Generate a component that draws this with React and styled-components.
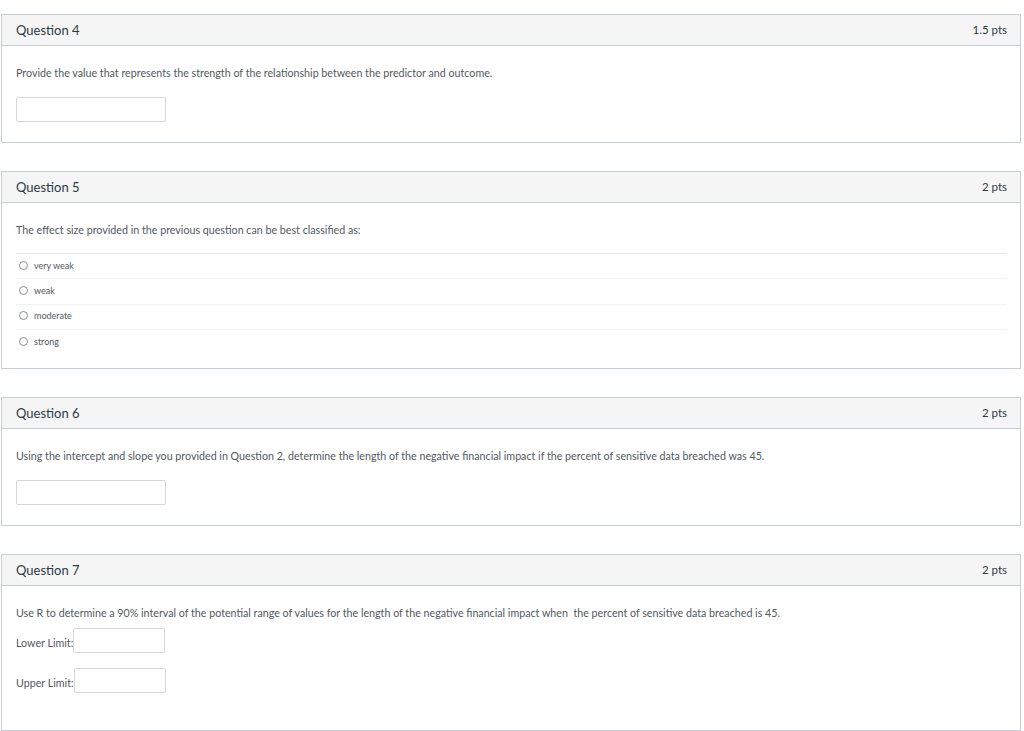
import React from "react";
import styled, { createGlobalStyle } from "styled-components";

const GlobalStyle = createGlobalStyle`
  body {
    margin: 0;
    background: #fff;
    font-family: Lato, "Open Sans", sans-serif;
    color: #2d3b45;
  }
`;

const Page = styled.div`
  padding: 14px 3px 0 1px;
`;

const Card = styled.div`
  border: 1px solid #c7cdd1;
  margin-bottom: 28px;
  background: #fff;
`;

const Header = styled.div`
  height: 29px;
  display: flex;
  align-items: center;
  justify-content: space-between;
  padding: 0 13px 1px 14px;
  background: #f5f5f5;
  border-bottom: 1px solid #c7cdd1;
`;

const Title = styled.span`
  font-size: 13px;
  color: #2d3b45;
`;

const Points = styled.span`
  font-size: 11.5px;
  color: #2d3b45;
`;

const Body = styled.div`
  padding: 20px 13px ${(p) => p.bottom || 20}px 14px;
`;

const Text = styled.div`
  font-size: 10.7px;
  line-height: 14px;
  color: #52595e;
  margin-bottom: ${(p) => p.gap || 17}px;
`;

const Field = styled.input`
  display: block;
  box-sizing: border-box;
  width: ${(p) => p.width || 150}px;
  height: 25px;
  border: 1px solid #d4d7da;
  border-radius: 2px;
  background: #fff;
  margin: 0;
`;

const Options = styled.div`
  display: flex;
  flex-direction: column;
`;

const Option = styled.label`
  display: flex;
  align-items: center;
  gap: 6px;
  height: 25.3px;
  padding: 0 0 2px 3px;
  box-sizing: border-box;
  border-top: 1px solid ${(p) => (p.first ? "#e6e8ea" : "#f0f1f2")};
  font-size: 9px;
  color: #52595e;
`;

const Radio = styled.span`
  box-sizing: border-box;
  width: 9px;
  height: 9px;
  border-radius: 50%;
  border: 1px solid #8a9095;
  background: #fff;
`;

const LimitRow = styled.div`
  display: flex;
  align-items: flex-end;
  margin-bottom: ${(p) => p.gap || 0}px;
`;

const LimitLabel = styled.span`
  font-size: 10.7px;
  line-height: 14px;
  padding-bottom: 3px;
  color: #52595e;
`;

const QuestionCard = ({ title, pts, children }) => (
  <Card>
    <Header>
      <Title>{title}</Title>
      <Points>{pts}</Points>
    </Header>
    {children}
  </Card>
);

export default function App() {
  return (
    <Page>
      <GlobalStyle />
      <QuestionCard title="Question 4" pts="1.5 pts">
        <Body>
          <Text>
            Provide the value that represents the strength of the relationship
            between the predictor and outcome.
          </Text>
          <Field type="text" />
        </Body>
      </QuestionCard>

      <QuestionCard title="Question 5" pts="2 pts">
        <Body bottom={14}>
          <Text gap={16}>
            The effect size provided in the previous question can be best
            classified as:
          </Text>
          <Options>
            {["very weak", "weak", "moderate", "strong"].map((o, i) => (
              <Option key={o} first={i === 0}>
                <Radio />
                {o}
              </Option>
            ))}
          </Options>
        </Body>
      </QuestionCard>

      <QuestionCard title="Question 6" pts="2 pts">
        <Body>
          <Text>
            Using the intercept and slope you provided in Question 2, determine
            the length of the negative financial impact if the percent of
            sensitive data breached was 45.
          </Text>
          <Field type="text" />
        </Body>
      </QuestionCard>

      <QuestionCard title="Question 7" pts="2 pts">
        <Body bottom={37}>
          <Text gap={8}>
            Use R to determine a 90% interval of the potential range of values
            for the length of the negative financial impact when&nbsp; the
            percent of sensitive data breached is 45.
          </Text>
          <LimitRow gap={15}>
            <LimitLabel>Lower Limit:</LimitLabel>
            <Field type="text" width={92} />
          </LimitRow>
          <LimitRow>
            <LimitLabel>Upper Limit:</LimitLabel>
            <Field type="text" width={92} />
          </LimitRow>
        </Body>
      </QuestionCard>
    </Page>
  );
}
